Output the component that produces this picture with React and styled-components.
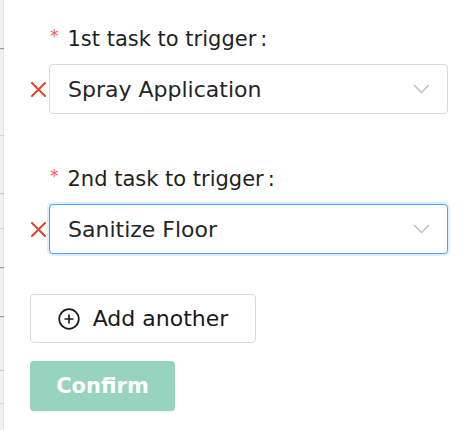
import React from "react";
import styled, { createGlobalStyle } from "styled-components";

const Global = createGlobalStyle`
  html, body { margin: 0; padding: 0; background: #fff; }
  body { font-family: "DejaVu Sans", "Open Sans", sans-serif; color: #1f1f1f; }
  * { box-sizing: border-box; }
`;

const Page = styled.div`
  display: flex;
  width: 474px;
  height: 430px;
  overflow: hidden;
  background: #fff;
`;

const EdgeStrip = styled.svg`
  flex: 0 0 4px;
  width: 4px;
  height: 430px;
  display: block;
`;

const Content = styled.div`
  display: flex;
  flex-direction: column;
  padding: 23px 0 0 26px;
`;

const FormItem = styled.div`
  display: grid;
  grid-template-columns: 19px 399px;
  grid-template-rows: 32px 50px;
  row-gap: 9px;
  margin-bottom: ${(p) => p.$mb}px;
`;

const Label = styled.div`
  grid-column: 2;
  display: flex;
  align-items: center;
  font-size: 21px;
  line-height: 32px;
  color: #1f1f1f;
  white-space: nowrap;
`;

const Required = styled.span`
  color: #ff5a52;
  font-size: 17px;
  margin: -6px 9px 0 1px;
  line-height: 1;
`;

const Colon = styled.span`
  margin-left: 4px;
`;

const RemoveCell = styled.div`
  grid-column: 1;
  display: flex;
  align-items: center;
  justify-content: flex-end;
  padding-right: 3px;
`;

const Select = styled.div`
  grid-column: 2;
  display: flex;
  align-items: center;
  justify-content: space-between;
  height: 50px;
  padding: 0 17px 0 18px;
  border: 1px solid ${(p) => (p.$focused ? "#4f9ff5" : "#d9d9d9")};
  border-radius: 4px;
  box-shadow: ${(p) => (p.$focused ? "0 0 0 2px rgba(24,144,255,0.15)" : "none")};
  font-size: 22px;
  color: #262626;
  background: #fff;
`;

const Button = styled.button`
  display: inline-flex;
  align-items: center;
  justify-content: center;
  align-self: flex-start;
  gap: 13px;
  height: ${(p) => p.$h}px;
  width: ${(p) => p.$w}px;
  font-family: inherit;
  font-size: 22px;
  border-radius: 4px;
  cursor: pointer;
  padding: 0;
`;

const GhostButton = styled(Button)`
  background: #fff;
  color: #1a1a1a;
  border: 1px solid #d9d9d9;
  margin-bottom: 18px;
`;

const PrimaryButton = styled(Button)`
  background: #96d4bf;
  color: #fff;
  border: none;
  font-weight: bold;
  font-size: 21px;
  box-shadow: 0 2px 0 rgba(0, 0, 0, 0.03);
`;

const RemoveIcon = () => (
  <svg width="15" height="15" viewBox="0 0 15 15">
    <path d="M1 1 L14 14 M14 1 L1 14" stroke="#e3432b" strokeWidth="2" strokeLinecap="round" />
  </svg>
);

const Chevron = () => (
  <svg width="17" height="10" viewBox="0 0 17 10">
    <path d="M1 1 L8.5 8.5 L16 1" stroke="#bfbfbf" strokeWidth="1.5" fill="none" />
  </svg>
);

const PlusCircle = () => (
  <svg width="22" height="22" viewBox="0 0 22 22">
    <circle cx="11" cy="11" r="9.8" stroke="#1a1a1a" strokeWidth="1.7" fill="none" />
    <path d="M11 6.5 V15.5 M6.5 11 H15.5" stroke="#1a1a1a" strokeWidth="1.7" />
  </svg>
);

const ticks = [
  { y: 48, c: "#9a9a9a" },
  { y: 135, c: "#d4d4d4" },
  { y: 193, c: "#c8c8c8" },
  { y: 228, c: "#d4d4d4" },
  { y: 267, c: "#9a9a9a" },
  { y: 316, c: "#9a9a9a" },
  { y: 370, c: "#d0d0d0" },
  { y: 403, c: "#d4d4d4" },
];

const items = [
  { label: "1st task to trigger", value: "Spray Application", focused: false, mb: 49 },
  { label: "2nd task to trigger", value: "Sanitize Floor", focused: true, mb: 40 },
];

export default function App() {
  return (
    <>
      <Global />
      <Page>
        <EdgeStrip viewBox="0 0 4 430">
          <rect x="0" y="0" width="3" height="430" fill="#f1f1f1" />
          <rect x="3" y="0" width="1" height="430" fill="#e6e6e6" />
          {ticks.map((t) => (
            <rect key={t.y} x="0" y={t.y} width="4" height="1.2" fill={t.c} />
          ))}
        </EdgeStrip>
        <Content>
          {items.map((it) => (
            <FormItem key={it.label} $mb={it.mb}>
              <Label>
                <Required>*</Required>
                {it.label}
                <Colon>:</Colon>
              </Label>
              <RemoveCell>
                <RemoveIcon />
              </RemoveCell>
              <Select $focused={it.focused}>
                <span>{it.value}</span>
                <Chevron />
              </Select>
            </FormItem>
          ))}
          <GhostButton $w={226} $h={49}>
            <PlusCircle />
            <span>Add another</span>
          </GhostButton>
          <PrimaryButton $w={145} $h={50}>Confirm</PrimaryButton>
        </Content>
      </Page>
    </>
  );
}
